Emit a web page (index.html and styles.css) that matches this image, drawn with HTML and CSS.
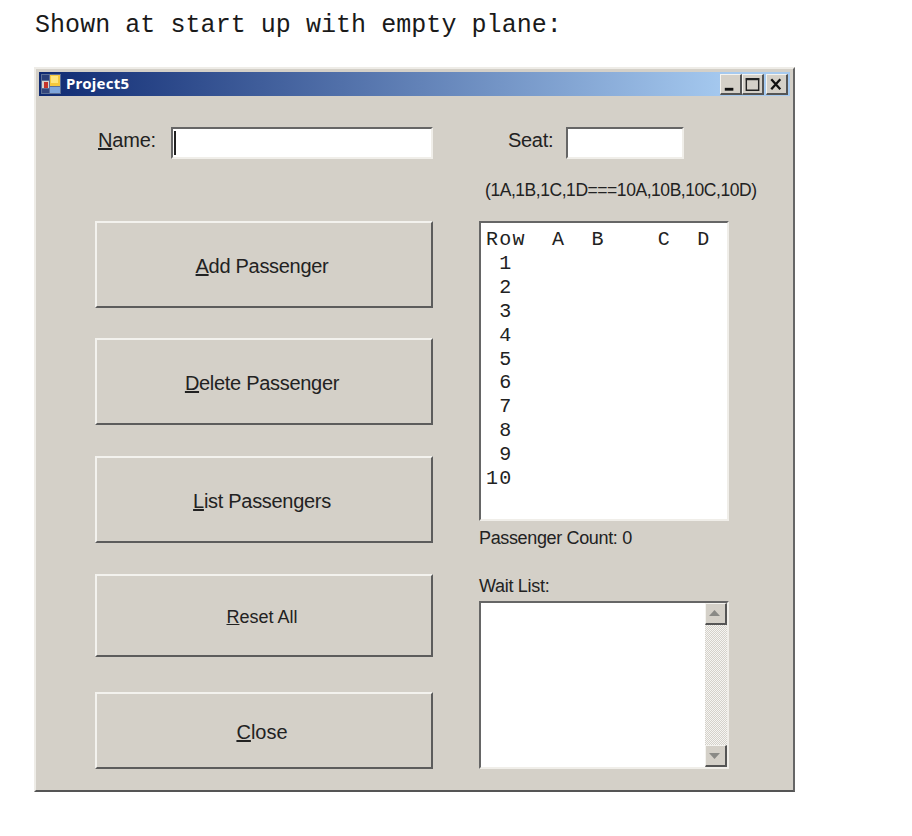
FILE: index.html
```html
<!DOCTYPE html>
<html lang="en">
<head>
<meta charset="utf-8">
<title>Project5</title>
<link rel="stylesheet" href="styles.css">
</head>
<body>
<h1 class="caption">Shown at start up with empty plane:</h1>
<div class="window">
  <div class="titlebar">
    <svg class="app-icon" viewBox="0 0 20 20" width="20" height="20" aria-hidden="true">
      <rect width="20" height="20" fill="#5c6f96"/>
      <rect x="1" y="1" width="7" height="5" fill="#2a3f78"/>
      <rect x="9" y="1" width="10" height="11" fill="#f6c83c"/>
      <rect x="10" y="2" width="7" height="7" fill="#fde57e"/>
      <rect x="1" y="7" width="7" height="7" fill="#d8d4cc"/>
      <rect x="3" y="8" width="4" height="6" fill="#c5342a"/>
      <rect x="1" y="15" width="7" height="4" fill="#34467c"/>
      <rect x="9" y="13" width="10" height="6" fill="#7fa6dc"/>
    </svg>
    <span class="title-text">Project5</span>
    <div class="window-controls">
      <span class="ctl"><svg viewBox="0 0 20 19" width="20" height="19" aria-hidden="true"><rect x="4" y="13" width="9" height="3" fill="#111"/></svg></span>
      <span class="ctl"><svg viewBox="0 0 20 19" width="20" height="19" aria-hidden="true"><path d="M3.5 3.5h13v12h-13z" fill="none" stroke="#222" stroke-width="1.5"/><path d="M3 4h14" stroke="#222" stroke-width="2"/></svg></span>
      <span class="ctl ctl-close"><svg viewBox="0 0 20 19" width="20" height="19" aria-hidden="true"><path d="M4.5 4l9.5 10.5M14 4L4.5 14.5" stroke="#111" stroke-width="2.4"/></svg></span>
    </div>
  </div>
  <div class="form">
    <div class="col col-left">
      <div class="name-row">
        <label class="label label-name"><u>N</u>ame:</label>
        <div class="field-wrap">
          <input class="field field-name" type="text">
          <span class="caret"></span>
        </div>
      </div>
      <div class="actions">
        <button class="btn btn-add" type="button"><u>A</u>dd Passenger</button>
        <button class="btn btn-delete" type="button"><u>D</u>elete Passenger</button>
        <button class="btn btn-list" type="button"><u>L</u>ist Passengers</button>
        <button class="btn btn-reset" type="button"><u>R</u>eset All</button>
        <button class="btn btn-close" type="button"><u>C</u>lose</button>
      </div>
    </div>
    <div class="col col-right">
      <div class="seat-row">
        <label class="label label-seat">Seat:</label>
        <input class="field field-seat" type="text">
      </div>
      <div class="hint">(1A,1B,1C,1D===10A,10B,10C,10D)</div>
      <pre class="seating">Row  A  B    C  D
 1
 2
 3
 4
 5
 6
 7
 8
 9
10</pre>
      <div class="count">Passenger Count: 0</div>
      <div class="wait-label">Wait List:</div>
      <div class="waitlist">
        <div class="scrollbar">
          <span class="sb-btn"><svg viewBox="0 0 18 20" width="18" height="20" aria-hidden="true"><path d="M3 12h11l-5.500-6z" fill="#8a8a86"/></svg></span>
          <span class="sb-track"></span>
          <span class="sb-btn"><svg viewBox="0 0 18 20" width="18" height="20" aria-hidden="true"><path d="M3 7h11l-5.500 6z" fill="#8a8a86"/></svg></span>
        </div>
      </div>
    </div>
  </div>
</div>
</body>
</html>
```
FILE: styles.css
```css
* { box-sizing: border-box; }

html, body {
  margin: 0;
  padding: 0;
  background: #fff;
}

body {
  width: 912px;
  height: 836px;
  overflow: hidden;
  font-family: "Liberation Sans", Arial, sans-serif;
  color: #222;
}

.caption {
  margin: 0;
  padding: 2px 0 0 35px;
  height: 48px;
  font: 400 25px/48px "Liberation Mono", "Courier New", monospace;
  letter-spacing: 0.05px;
  color: #1a1a1a;
}

.window {
  margin: 19px 0 0 34px;
  width: 761px;
  height: 725px;
  background: #d4d0c8;
  border: 2px solid;
  border-color: #eeece7 #666 #555 #eeece7;
  padding: 3px;
}

.titlebar {
  display: flex;
  align-items: center;
  height: 24px;
  padding: 0 2px 0 2px;
  background: linear-gradient(90deg, #0f2a72 0%, #a6caf0 92%);
}

.app-icon { flex: none; }

.title-text {
  margin: 0 0 2px 5px;
  font: 700 15px/22px "Noto Sans", Tahoma, sans-serif;
  letter-spacing: 0.25px;
  color: #fff;
}

.window-controls {
  display: flex;
  margin: 1px 0 0 auto;
}

.ctl {
  display: flex;
  width: 22px;
  height: 21px;
  background: #d4d0c8;
  border: solid;
  border-width: 1px 2px 2px 1px;
  border-color: #f4f3ef #555 #555 #f4f3ef;
  overflow: hidden;
}

.ctl-close { margin-left: 2px; }

.form {
  display: flex;
  gap: 46px;
  padding: 31px 0 0 56px;
}

.col {
  display: flex;
  flex-direction: column;
}

.col-left { width: 338px; }
.col-right { width: 250px; }

.name-row,
.seat-row {
  display: flex;
  align-items: flex-start;
  height: 32px;
}

.name-row { margin-bottom: 62px; }
.seat-row { padding-left: 29px; }

.label {
  font-size: 20px;
  line-height: 26px;
}

.label-name {
  width: 76px;
  padding-left: 3px;
  letter-spacing: -0.2px;
}

.label-seat {
  width: 58px;
  letter-spacing: -0.3px;
}

.field-wrap {
  position: relative;
  flex: 1;
  height: 32px;
}

.field {
  display: block;
  height: 32px;
  margin: 0;
  padding: 0;
  background: #fff;
  border: 2px solid;
  border-color: #666 #f0eee9 #f0eee9 #666;
  border-radius: 0;
  outline: none;
}

.field-name { width: 100%; }
.field-seat { width: 118px; }

.caret {
  position: absolute;
  left: 3px;
  top: 4px;
  width: 2px;
  height: 24px;
  background: #222;
}

.actions {
  display: flex;
  flex-direction: column;
  gap: 31px;
}

.btn {
  display: block;
  width: 338px;
  margin: 0;
  padding: 4px 4px 0 0;
  background: #d4d0c8;
  border: 2px solid;
  border-color: #f3f2ee #5c5c5c #5c5c5c #f3f2ee;
  border-radius: 0;
  font-family: "Liberation Sans", Arial, sans-serif;
  font-size: 20px;
  letter-spacing: -0.3px;
  color: #222;
}

.btn-add { height: 87px; margin-bottom: -1px; }
.btn-delete { height: 87px; }
.btn-list { height: 87px; }
.btn-reset { height: 83px; font-size: 18px; margin-bottom: 4px; letter-spacing: 0; }
.btn-close { height: 77px; letter-spacing: 0; }

.hint {
  margin: 19px 0 19px 6px;
  font-size: 17.500px;
  line-height: 24px;
  white-space: nowrap;
  letter-spacing: -0.45px;
}

.seating {
  margin: 0;
  width: 250px;
  height: 300px;
  padding: 5px 0 0 5px;
  background: #fff;
  border: 2px solid;
  border-color: #666 #f0eee9 #f0eee9 #666;
  font: 400 20px/23.9px "Liberation Mono", "Courier New", monospace;
  letter-spacing: 1.2px;
  color: #222;
}

.count {
  margin-top: 5px;
  font-size: 18px;
  line-height: 24px;
  letter-spacing: -0.35px;
}

.wait-label {
  margin-top: 24px;
  font-size: 18px;
  line-height: 24px;
  height: 24px;
  letter-spacing: -0.3px;
}

.waitlist {
  display: flex;
  justify-content: flex-end;
  width: 250px;
  height: 168px;
  margin-top: 3px;
  background: #fff;
  border: 2px solid;
  border-color: #666 #f0eee9 #f0eee9 #666;
}

.scrollbar {
  display: flex;
  flex-direction: column;
  width: 22px;
  height: 100%;
}

.sb-btn {
  display: flex;
  flex: none;
  height: 22px;
  background: #d4d0c8;
  border: solid;
  border-width: 1px 2px 2px 1px;
  border-color: #f4f3ef #555 #555 #f4f3ef;
  overflow: hidden;
}

.sb-track {
  flex: 1;
  background: repeating-conic-gradient(#d4d1ca 0 25%, #f6f5f2 0 50%) 0 0 / 2px 2px;
}
```
